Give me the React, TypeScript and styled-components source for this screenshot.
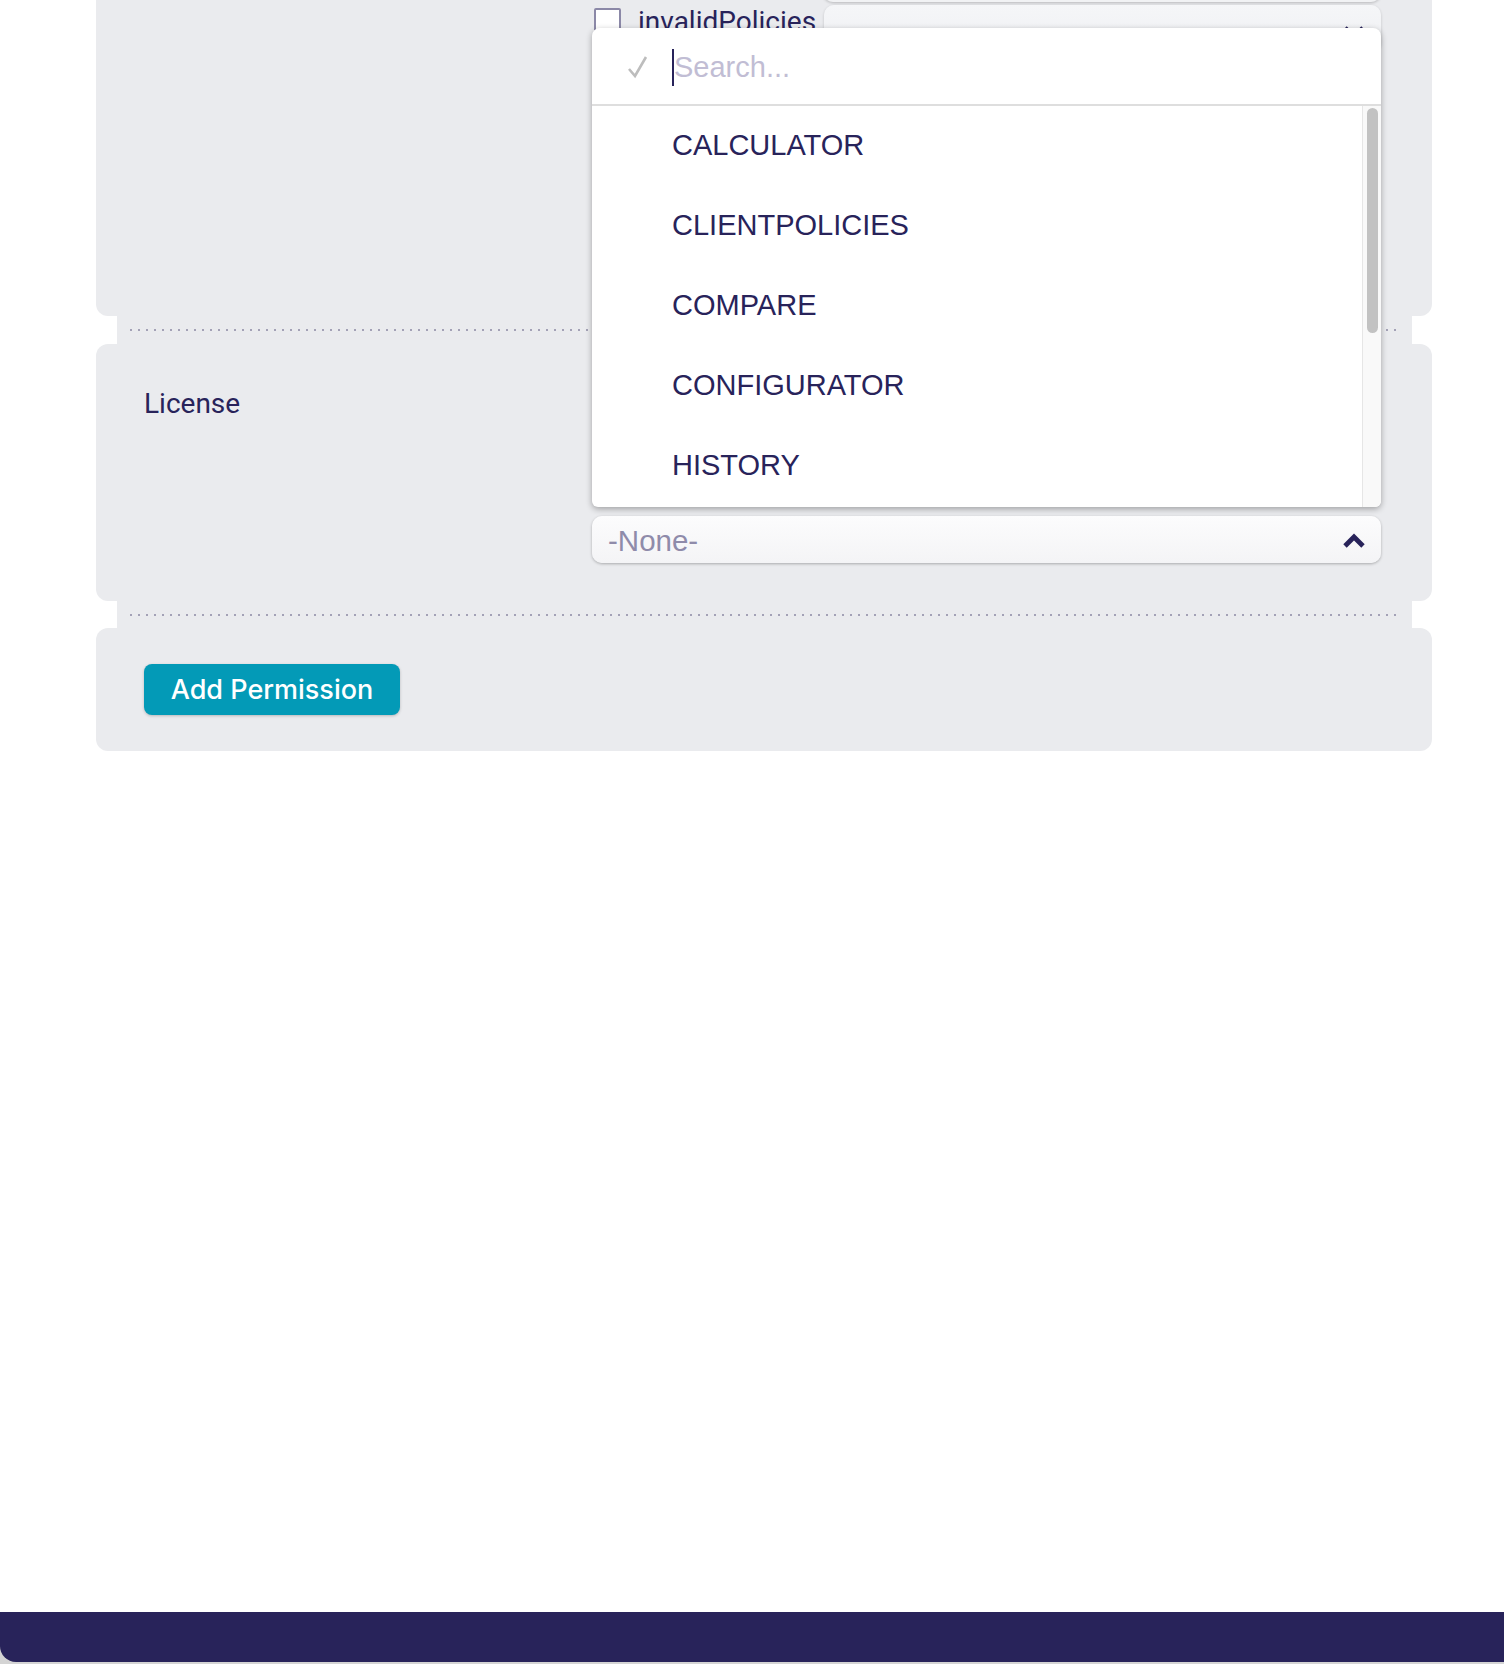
import React from 'react';
import styled, { createGlobalStyle } from 'styled-components';

const NAVY = '#28235a';
const PANEL = '#eaebee';

const GlobalStyle = createGlobalStyle`
  html, body {
    margin: 0;
    padding: 0;
    background: #ffffff;
  }
  * {
    box-sizing: border-box;
  }
`;

const Page = styled.div`
  display: flex;
  flex-direction: column;
  min-height: 1664px;
  overflow: hidden;
  background: #ffffff;
`;

const Content = styled.main`
  flex: 1;
  padding: 0 72px 0 96px;
`;

const Panel = styled.section<{ $top?: boolean }>`
  background: ${PANEL};
  border-radius: ${({ $top }) => ($top ? '0 0 12px 12px' : '12px')};
`;

const Separator = styled.div<{ $h: number }>`
  height: ${({ $h }) => $h}px;
  margin: 0 20px 0 21px;
  background-color: ${PANEL};
  display: flex;
  align-items: center;
  padding: 0 12px 0 13px;

  &::after {
    content: '';
    display: block;
    width: 100%;
    height: 2px;
    background-image: linear-gradient(to right, #a3a1b6 2px, transparent 2px);
    background-size: 8px 2px;
    background-repeat: repeat-x;
  }
`;

const FieldGrid = styled.div`
  display: grid;
  grid-template-columns: 448px 1fr;
  padding: 0 51px 0 48px;
`;

const TopGrid = styled(FieldGrid)`
  height: 316px;
`;

const LicenseGrid = styled(FieldGrid)`
  padding-top: 43px;
  padding-bottom: 38px;
`;

const Label = styled.div`
  font-family: Roboto, 'Liberation Sans', sans-serif;
  font-size: 28px;
  line-height: 33px;
  color: ${NAVY};
`;

const Controls = styled.div`
  display: flex;
  flex-direction: column;
`;

const GhostSelect = styled.div`
  height: 52px;
  margin: -50px 0 0 231px;
  border-radius: 10px;
  background: #f1f2f4;
  box-shadow: 0 1px 3px rgba(0, 0, 0, 0.22);
`;

const CheckRow = styled.div`
  display: flex;
  align-items: flex-start;
  margin-top: 3px;
`;

const Checkbox = styled.span`
  width: 27px;
  height: 27px;
  margin: 3px 0 0 2px;
  flex: none;
  border: 2px solid #8b88a7;
  border-radius: 2px;
  background: #ffffff;
`;

const CheckLabel = styled(Label)`
  margin-left: 17px;
`;

const RowSelect = styled.div`
  margin-left: auto;
  width: 557px;
  height: 47px;
  border-radius: 10px;
  background: linear-gradient(#f5f6f8, #eff0f3);
  box-shadow: 0 1px 3px rgba(0, 0, 0, 0.18);
  display: flex;
  justify-content: flex-end;
  padding: 20px 15px 0 0;
`;

const SelectWrap = styled.div`
  position: relative;
  margin-top: 129px;
`;

const Select = styled.div`
  height: 47px;
  border-radius: 10px;
  background: linear-gradient(#fcfcfd, #f4f4f6);
  box-shadow: 0 1px 3px rgba(0, 0, 0, 0.28);
  display: flex;
  align-items: center;
  justify-content: space-between;
  padding: 2px 15px 0 16px;
`;

const Placeholder = styled.span`
  font-family: 'Liberation Sans', Arial, sans-serif;
  font-size: 29.5px;
  color: #8f8baa;
`;

const Popup = styled.div`
  position: absolute;
  left: 0;
  right: 0;
  bottom: calc(100% + 9px);
  height: 479px;
  display: flex;
  flex-direction: column;
  background: #ffffff;
  border-radius: 8px 8px 6px 6px;
  box-shadow: 0 2px 6px rgba(0, 0, 0, 0.32);
  overflow: hidden;
`;

const SearchRow = styled.div`
  height: 78px;
  flex: none;
  display: flex;
  align-items: center;
  padding: 2px 0 0 35px;
  border-bottom: 2px solid #dedede;
`;

const SearchInput = styled.div`
  display: flex;
  align-items: center;
  margin-left: 23px;
  font-family: 'Liberation Sans', Arial, sans-serif;
  font-size: 29px;
  color: #c1bdd4;

  &::before {
    content: '';
    width: 2px;
    height: 37px;
    background: ${NAVY};
  }
`;

const ListArea = styled.div`
  flex: 1;
  display: flex;
  min-height: 0;
`;

const Options = styled.ul`
  flex: 1;
  margin: 0;
  padding: 0;
  list-style: none;
  overflow: hidden;
`;

const Option = styled.li`
  height: 80px;
  display: flex;
  align-items: center;
  padding: 0 0 2px 80px;
  font-family: 'Liberation Sans', Arial, sans-serif;
  font-size: 29px;
  color: ${NAVY};
`;

const ScrollTrack = styled.div`
  width: 19px;
  flex: none;
  padding: 2px 3px 0 4px;
  background: #f9f9f9;
  border-left: 1px solid #e6e6e6;
`;

const ScrollThumb = styled.div`
  height: 225px;
  border-radius: 6px;
  background: #c2c2c2;
`;

const ButtonPanel = styled.div`
  padding: 36px 48px;
`;

const Button = styled.button`
  width: 256px;
  height: 51px;
  border: none;
  border-radius: 8px;
  background: #039ab7;
  box-shadow: 0 1px 3px rgba(0, 0, 0, 0.22);
  color: #ffffff;
  font-family: Inter, Roboto, sans-serif;
  font-size: 27px;
  font-weight: 500;
  padding: 0;
  cursor: pointer;
`;

const FooterBase = styled.div`
  background: #d4d4d4;
  padding-bottom: 2px;
`;

const Footer = styled.footer`
  height: 50px;
  background: ${NAVY};
  border-bottom-left-radius: 16px;
`;

const Chevron = ({ down }: { down?: boolean }) => (
  <svg width="24" height="16" viewBox="0 0 24 16">
    <polyline
      points={down ? '3,3 12,12 21,3' : '3,13 12,4 21,13'}
      fill="none"
      stroke={NAVY}
      strokeWidth="4.8"
      strokeLinejoin="miter"
    />
  </svg>
);

const CheckMark = () => (
  <svg width="22" height="24" viewBox="0 0 22 24">
    <path d="M2 14 L8 21 L19 2" fill="none" stroke="#bdbdbd" strokeWidth="2.6" />
  </svg>
);

const modules = [
  'CALCULATOR',
  'CLIENTPOLICIES',
  'COMPARE',
  'CONFIGURATOR',
  'HISTORY',
  'INVALIDPOLICIES',
  'POLICIES',
  'REPORTS',
  'SETTINGS',
];

export default function App() {
  return (
    <Page>
      <GlobalStyle />
      <Content>
        <Panel $top>
          <TopGrid>
            <div />
            <Controls>
              <GhostSelect />
              <CheckRow>
                <Checkbox />
                <CheckLabel>invalidPolicies</CheckLabel>
                <RowSelect>
                  <Chevron down />
                </RowSelect>
              </CheckRow>
            </Controls>
          </TopGrid>
        </Panel>
        <Separator $h={28} />
        <Panel>
          <LicenseGrid>
            <Label>License</Label>
            <Controls>
              <SelectWrap>
                <Popup>
                  <SearchRow>
                    <CheckMark />
                    <SearchInput>Search...</SearchInput>
                  </SearchRow>
                  <ListArea>
                    <Options>
                      {modules.map((m) => (
                        <Option key={m}>{m}</Option>
                      ))}
                    </Options>
                    <ScrollTrack>
                      <ScrollThumb />
                    </ScrollTrack>
                  </ListArea>
                </Popup>
                <Select>
                  <Placeholder>-None-</Placeholder>
                  <Chevron />
                </Select>
              </SelectWrap>
            </Controls>
          </LicenseGrid>
        </Panel>
        <Separator $h={27} />
        <Panel>
          <ButtonPanel>
            <Button>Add Permission</Button>
          </ButtonPanel>
        </Panel>
      </Content>
      <FooterBase>
        <Footer />
      </FooterBase>
    </Page>
  );
}
